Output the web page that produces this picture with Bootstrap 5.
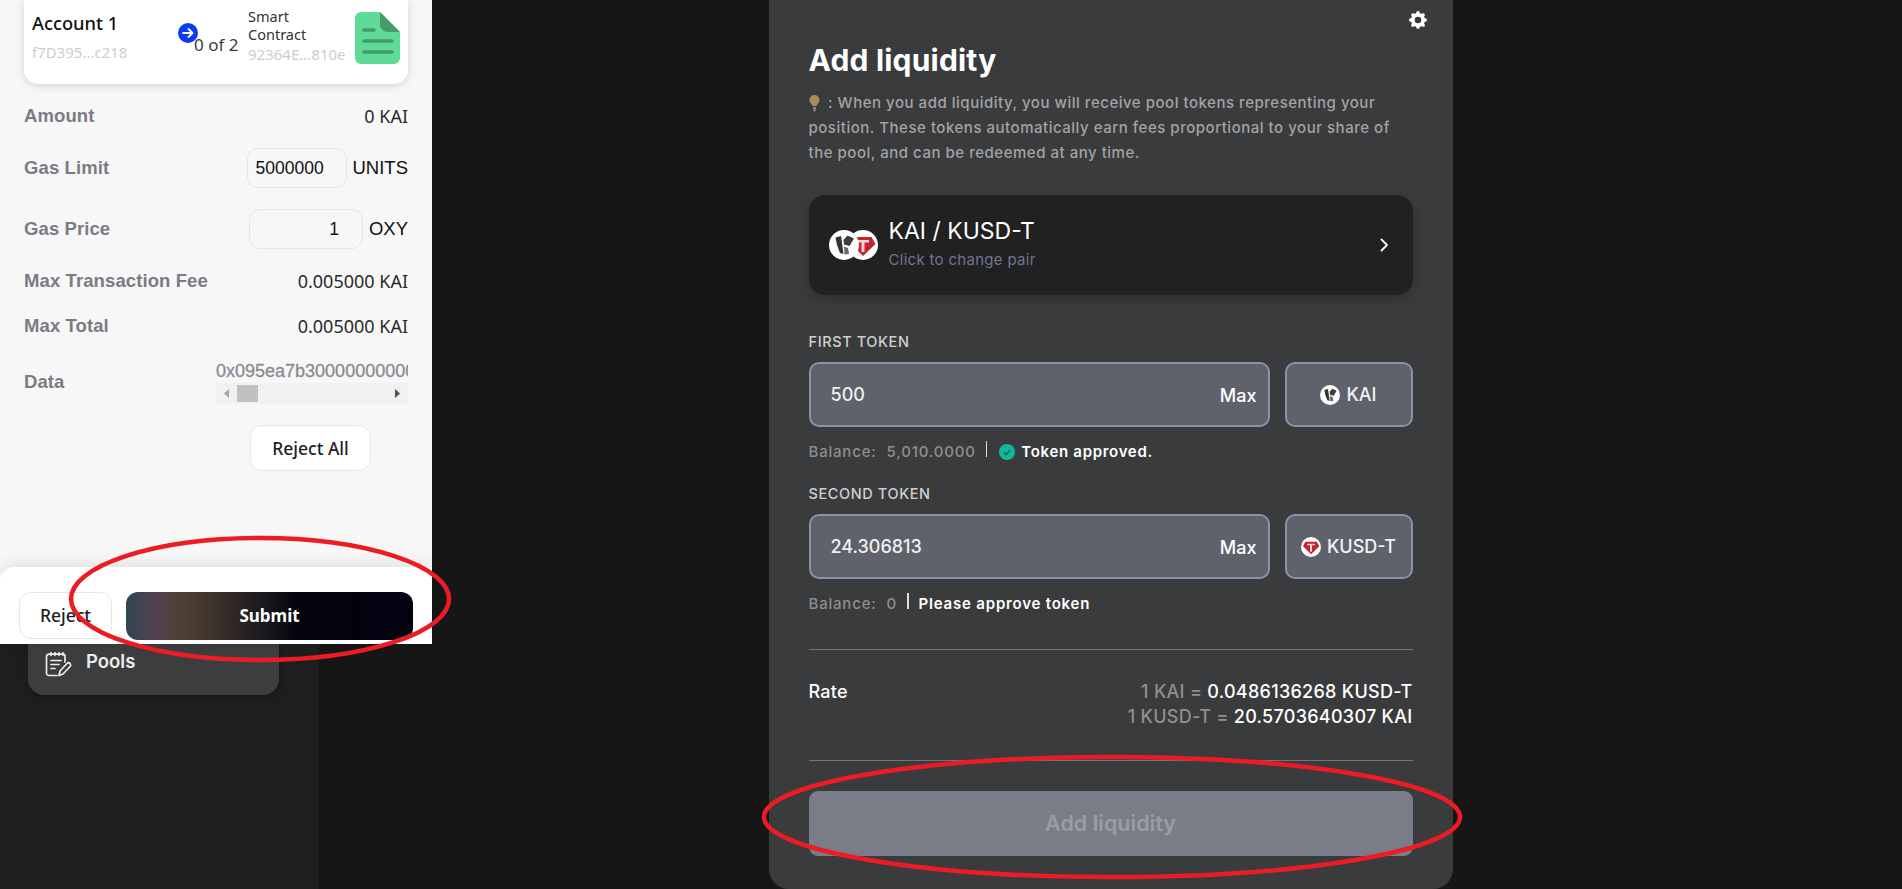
<!DOCTYPE html>
<html lang="en">
<head>
<meta charset="utf-8">
<title>Add liquidity</title>
<link rel="stylesheet" href="https://cdn.jsdelivr.net/npm/bootstrap@5.3.0/dist/css/bootstrap.min.css">
<style>
html,body{height:889px;overflow:hidden;background:#161616;}
body{font-family:"Inter",sans-serif;}
.stage{position:relative;height:889px;overflow:hidden;}
.side-col{width:319px;background:#1e1e1e;padding:567px 40px 0 28px;flex:none;}
.pool-item{height:128px;background:#3c3d3f;border-radius:16px;padding:85px 0 0 17px;color:#ececec;font-size:18.500px;font-weight:600;box-shadow:0 2px 6px rgba(0,0,0,.3);gap:14px;}
.pool-item span{line-height:20px;margin-top:-1px;}
.main-col{flex:1;}
.liq-card{width:684px;height:889px;background:#3a3b3d;border-radius:0 0 20px 20px;padding:0 40px;color:#fff;}
.gear-line{height:18px;margin:11px -14px 0 0;}
.liq-title{font-size:30px;line-height:34px;font-weight:700;margin:14px 0 0;letter-spacing:.2px;}
.liq-note{font-size:15px;line-height:25px;font-weight:500;color:#a3a3a3;margin:13px 0 0;letter-spacing:.52px;}
.pair-box{height:100px;margin-top:30px;background:#212121;border-radius:16px;padding:0 20px;box-shadow:0 4px 10px rgba(0,0,0,.22);}
.pair-logos{width:52px;height:30px;position:relative;margin-right:8px;}
.pair-logos svg{position:absolute;top:0;}
.pair-name{font-size:23px;line-height:26px;margin-top:-2px;font-weight:400;}
.pair-hint{font-size:15px;line-height:20px;color:#6f7690;margin-top:6px;letter-spacing:.3px;}
.tok-label{font-size:14.500px;line-height:20px;font-weight:500;color:#cfcfcf;letter-spacing:.6px;}
.first-label{margin-top:37px;}
.second-label{margin-top:22px;}
.tok-row{margin-top:10px;gap:15px;height:65px;}
.tok-field{flex:1;background:#5f626b;border:2px solid #8b93a6;border-radius:10px;padding:0 11px 0 20px;font-size:18px;font-weight:500;color:#f0f0f0;}
.tok-max{font-size:18px;font-weight:500;margin-top:2px;color:#fff;}
.tok-pick{width:128px;background:#5f626b;border:2px solid #8b93a6;border-radius:10px;font-size:18px;font-weight:500;color:#f2f2f2;gap:6px;padding:0;}
.tok-status{margin-top:15px;font-size:15px;line-height:20px;font-weight:500;color:#8e8e8e;letter-spacing:.8px;}
.tok-status .bal{margin-left:10px;}
.tok-bar{width:1.500px;height:16px;background:#ddd;margin:-6px 12px 0 10px;}
.tok-ok{color:#fff;margin-left:6px;font-weight:600;letter-spacing:.7px;}
.tok-warn{color:#fff;font-weight:600;margin-left:-2px;letter-spacing:.8px;}
.liq-rule{height:1px;background:#73747c;}
.rule-a{margin-top:35px;}
.rate-box{margin-top:29px;line-height:25px;font-size:18px;font-weight:500;height:51px;letter-spacing:.28px;}
.rate-vals{color:#8f8f8f;text-align:right;}
.rate-vals b{color:#fff;font-weight:500;}
.rule-b{margin-top:30px;}
.liq-submit{display:block;width:100%;height:65px;margin-top:30px;background:#7a7c88;border:0;border-radius:9px;color:#9b9da3;font-size:21.500px;font-weight:600;}
.liq-submit:disabled{background:#7a7c88;color:#9b9da3;opacity:1;}

.wallet-pop{position:absolute;left:0;top:0;width:432px;height:644px;background:#f7f7f7;color:#1a1a1a;font-family:"Noto Sans",sans-serif;}
.tx-head{height:84px;margin:0 24px;padding:0 8px;background:#fff;border-radius:0 0 14px 14px;box-shadow:0 2px 8px rgba(0,0,0,.14);}
.acc-col{width:146px;}
.acc-name{font-size:18.300px;line-height:22px;margin-top:12px;font-weight:500;color:#111;}
.acc-addr{font-size:15px;line-height:20px;margin-top:8px;color:#cdcdcd;}
.arrow-dot{width:20px;height:20px;margin-top:23px;flex:none;margin-right:-4px;}
.of-count{width:54px;font-size:17px;line-height:20px;margin-top:35px;color:#3b3b45;flex:none;padding-right:10px;white-space:nowrap;}
.sc-col{width:107px;flex:none;}
.sc-name{font-size:14.500px;line-height:18px;margin-top:7px;color:#333;}
.sc-addr{font-size:15px;line-height:20px;color:#cdcdcd;margin-top:1px;white-space:nowrap;}
.doc-ico{margin-top:12px;flex:none;}
.tx-row{margin:0 24px;}
.tx-key{font-family:"Liberation Sans",sans-serif;font-weight:700;font-size:18.500px;line-height:24px;color:#7b7b86;letter-spacing:.1px;}
.tx-val{font-size:18px;line-height:24px;color:#2a2a2a;}
.row-amount{margin-top:20px;}
.row-limit{margin-top:20px;height:40px;}
.row-price{margin-top:21px;height:40px;}
.row-fee{margin-top:20px;}
.row-total{margin-top:21px;}
.row-data{margin-top:21px;height:45px;}
.gas-input{height:40px;background:#f7f7f7;border:1px solid #e6e6e6;border-radius:11px;font-family:"Liberation Sans",sans-serif;font-size:17.500px;padding:0 8px;color:#111;margin-right:6px;box-shadow:none;}
.gas-a{width:100px;}
.gas-b{width:114px;text-align:right;padding-right:23px;}
.gas-unit{font-family:"Liberation Sans",sans-serif;font-size:18.500px;color:#111;}
.data-wrap{width:192px;}
.data-text{font-family:"Liberation Sans",sans-serif;font-size:18px;line-height:24px;color:#8a8a92;overflow:hidden;white-space:nowrap;-webkit-text-stroke:.3px #8a8a92;}
.scroll-track{height:21px;background:#f1f1f1;padding:0 8px;}
.scroll-thumb{width:21px;height:17px;background:#c1c1c1;margin-left:8px;}
.reject-all-line{margin:21px 0 0 250px;}
.pop-btn{background:#fff;border:1px solid #e6e6e6;border-radius:12px;color:#1d1d27;font-size:17.500px;font-weight:500;padding:0;}
.reject-all{width:121px;height:46px;}
.pop-foot{position:absolute;left:0;right:0;bottom:0;height:77px;background:#fff;border-radius:14px 0 0 0;padding:25px 19px 0;box-shadow:0 -4px 14px rgba(0,0,0,.09);gap:14px;}
.reject-one{width:93px;height:47px;}
.submit-btn{width:287px;height:48px;border:0;border-radius:12px;color:#fff;font-weight:700;font-size:17px;padding:0;background:linear-gradient(90deg,#2f4651 0%,#53414f 10%,#4d3f33 20%,#3b302c 32%,#16161b 50%,#03030f 60%,#020210 100%);}
.submit-btn:hover{color:#fff;}
.ink-layer{position:absolute;left:0;top:0;pointer-events:none;}
</style>
</head>
<body>
<svg width="0" height="0" class="d-block" style="position:absolute">
  <symbol id="kai-logo" viewBox="0 0 30 30">
    <circle cx="15" cy="15" r="15" fill="#fff"/>
    <path d="M6.500 7.500l5.500-1.500 2.500 18-3.500-1-3-8z" fill="#333"/>
    <path d="M14.500 10l4-4.500 6.500 3-4.500 7.500-5.500-1.500z" fill="#3d3d3d"/>
    <path d="M15 16.500l4 1.500 1 6-4.500.5z" fill="#666"/>
  </symbol>
  <symbol id="kusd-logo" viewBox="0 0 30 30">
    <circle cx="15" cy="15" r="15" fill="#fff"/>
    <path d="M6.500 7h17l4 7L15 26 3 14z" fill="#c4222c"/>
    <path d="M9 10h12v2.500h-4.500v9.500h-3v-9.500H9z" fill="#f4d5d5"/>
  </symbol>
</svg>

<div class="stage d-flex">
  <aside class="side-col">
    <div class="pool-item d-flex">
      <svg width="27" height="25" viewBox="0 0 27 25" fill="none" stroke="#ececec" stroke-width="1.700" stroke-linecap="round" stroke-linejoin="round">
        <path d="M20 10V4.200a2 2 0 0 0-2-2H4a2.500 2.500 0 0 0-2.500 2.500V21A2.500 2.500 0 0 0 4 23.500h8"/>
        <path d="M6 .8v2.500M10 .8v2.500M14 .8v2.500M18 .8v2.500M6 8.500h10M6 12.500h8M6 16.500h4"/>
        <path d="M14 23.500l1-4.500 7-7.500a2 2 0 0 1 3 3l-7 7.500z"/>
      </svg>
      <span>Pools</span>
    </div>
  </aside>

  <main class="main-col d-flex justify-content-center">
    <section class="liq-card">
      <div class="gear-line d-flex justify-content-end">
        <svg width="18" height="18" viewBox="0 0 16 16" fill="#fff"><path d="M9.405 1.05c-.413-1.4-2.397-1.4-2.81 0l-.1.34a1.464 1.464 0 0 1-2.105.872l-.31-.17c-1.283-.698-2.686.705-1.987 1.987l.169.311c.446.82.023 1.841-.872 2.105l-.34.1c-1.4.413-1.4 2.397 0 2.81l.34.1a1.464 1.464 0 0 1 .872 2.105l-.17.31c-.698 1.283.705 2.686 1.987 1.987l.311-.169a1.464 1.464 0 0 1 2.105.872l.1.34c.413 1.4 2.397 1.4 2.81 0l.1-.34a1.464 1.464 0 0 1 2.105-.872l.31.17c1.283.698 2.686-.705 1.987-1.987l-.169-.311a1.464 1.464 0 0 1 .872-2.105l.34-.1c1.4-.413 1.4-2.397 0-2.81l-.34-.1a1.464 1.464 0 0 1-.872-2.105l.17-.31c.698-1.283-.705-2.686-1.987-1.987l-.311.169a1.464 1.464 0 0 1-2.105-.872l-.1-.34zM8 10.930a2.929 2.929 0 1 1 0-5.860 2.929 2.929 0 0 1 0 5.858z"/></svg>
      </div>
      <h1 class="liq-title">Add liquidity</h1>
      <p class="liq-note"><svg width="11" height="17" viewBox="0 0 11 17" class="align-text-bottom me-1"><path d="M5.500 0C8.500 0 10.500 2.200 10.500 5c0 2.500-2 3.500-3 6H3.500c-1-2.500-3-3.500-3-6C.5 2.200 2.500 0 5.500 0z" fill="#a68c58"/><path d="M4 12h3l-.7 4.500H4.700z" fill="#8b8b8b"/></svg> : When you add liquidity, you will receive pool tokens representing your position. These tokens automatically earn fees proportional to your share of the pool, and can be redeemed at any time.</p>

      <div class="pair-box d-flex align-items-center">
        <div class="pair-logos flex-none">
          <svg width="30" height="30" style="left:19px"><use href="#kusd-logo"/></svg>
          <svg width="30" height="30" style="left:0"><use href="#kai-logo"/></svg>
        </div>
        <div class="flex-grow-1">
          <div class="pair-name">KAI / KUSD-T</div>
          <div class="pair-hint">Click to change pair</div>
        </div>
        <svg class="me-1" width="10" height="16" viewBox="0 0 10 16" fill="none" stroke="#fff" stroke-width="1.800" stroke-linecap="round" stroke-linejoin="round"><path d="M2.500 2.500L8 8l-5.500 5.500"/></svg>
      </div>

      <div class="tok-label first-label">FIRST TOKEN</div>
      <div class="tok-row d-flex">
        <div class="tok-field d-flex align-items-center justify-content-between"><span>500</span><span class="tok-max">Max</span></div>
        <button class="tok-pick btn d-flex align-items-center justify-content-center" type="button"><svg width="20" height="20"><use href="#kai-logo"/></svg>KAI</button>
      </div>
      <div class="tok-status d-flex align-items-center">
        <span>Balance:</span><span class="bal">5,010.0000</span><span class="tok-bar"></span>
        <svg width="16" height="16" viewBox="0 0 16 16"><circle cx="8" cy="8" r="8" fill="#10b99a"/><path d="M4.800 8.300l2.300 2.300 4-4.500" fill="none" stroke="#264a44" stroke-width="1.300"/></svg>
        <span class="tok-ok">Token approved.</span>
      </div>

      <div class="tok-label second-label">SECOND TOKEN</div>
      <div class="tok-row d-flex">
        <div class="tok-field d-flex align-items-center justify-content-between"><span>24.306813</span><span class="tok-max">Max</span></div>
        <button class="tok-pick btn d-flex align-items-center justify-content-center" type="button"><svg width="20" height="20"><use href="#kusd-logo"/></svg>KUSD-T</button>
      </div>
      <div class="tok-status d-flex align-items-center">
        <span>Balance:</span><span class="bal">0</span><span class="tok-bar"></span>
        <span class="tok-warn">Please approve token</span>
      </div>

      <div class="liq-rule rule-a"></div>
      <div class="rate-box d-flex justify-content-between">
        <span>Rate</span>
        <div class="rate-vals">
          <div>1 KAI = <b>0.0486136268 KUSD-T</b></div>
          <div>1 KUSD-T = <b>20.5703640307 KAI</b></div>
        </div>
      </div>
      <div class="liq-rule rule-b"></div>
      <button class="liq-submit" type="button" disabled>Add liquidity</button>
    </section>
  </main>

  <div class="wallet-pop">
    <div class="tx-head d-flex">
      <div class="acc-col">
        <div class="acc-name">Account 1</div>
        <div class="acc-addr">f7D395...c218</div>
      </div>
      <svg class="arrow-dot" width="20" height="20" viewBox="0 0 20 20"><circle cx="10" cy="10" r="10" fill="#0a3cf5"/><path d="M5 10h9M10.500 6l4 4-4 4" fill="none" stroke="#fff" stroke-width="1.800" stroke-linecap="round" stroke-linejoin="round"/></svg>
      <div class="of-count">0 of 2</div>
      <div class="sc-col">
        <div class="sc-name">Smart<br>Contract</div>
        <div class="sc-addr">92364E...810e</div>
      </div>
      <svg class="doc-ico" width="45" height="52" viewBox="0 0 45 52"><path d="M6 0h19l20 20v26a6 6 0 0 1-6 6H6a6 6 0 0 1-6-6V6a6 6 0 0 1 6-6z" fill="#5fdb95"/><path d="M25 0l20 20H33a8 8 0 0 1-8-8z" fill="#479a6c"/><path d="M9 18h10M9 29h28M9 40h28" stroke="#479a6c" stroke-width="3.500" stroke-linecap="round"/></svg>
    </div>

    <div class="tx-row row-amount d-flex justify-content-between"><span class="tx-key">Amount</span><span class="tx-val">0 KAI</span></div>
    <div class="tx-row row-limit d-flex justify-content-between align-items-center">
      <span class="tx-key">Gas Limit</span>
      <div class="d-flex align-items-center"><input class="gas-input gas-a" value="5000000" aria-label="Gas limit"><span class="gas-unit">UNITS</span></div>
    </div>
    <div class="tx-row row-price d-flex justify-content-between align-items-center">
      <span class="tx-key">Gas Price</span>
      <div class="d-flex align-items-center"><input class="gas-input gas-b" value="1" aria-label="Gas price"><span class="gas-unit">OXY</span></div>
    </div>
    <div class="tx-row row-fee d-flex justify-content-between"><span class="tx-key">Max Transaction Fee</span><span class="tx-val">0.005000 KAI</span></div>
    <div class="tx-row row-total d-flex justify-content-between"><span class="tx-key">Max Total</span><span class="tx-val">0.005000 KAI</span></div>
    <div class="tx-row row-data d-flex justify-content-between align-items-center">
      <span class="tx-key">Data</span>
      <div class="data-wrap">
        <div class="data-text">0x095ea7b3000000000000000000000000</div>
        <div class="scroll-track d-flex align-items-center">
          <svg width="5" height="9" viewBox="0 0 5 9"><path d="M5 0v9L0 4.500z" fill="#a3a3a3"/></svg>
          <div class="scroll-thumb"></div>
          <svg class="ms-auto" width="5" height="9" viewBox="0 0 5 9"><path d="M0 0v9l5-4.500z" fill="#505050"/></svg>
        </div>
      </div>
    </div>
    <div class="reject-all-line"><button class="btn pop-btn reject-all" type="button">Reject All</button></div>

    <div class="pop-foot d-flex">
      <button class="btn pop-btn reject-one" type="button">Reject</button>
      <button class="btn submit-btn" type="button">Submit</button>
    </div>
  </div>

  <svg class="ink-layer" width="1902" height="889" fill="none" stroke="#ed1c24" stroke-width="4.500">
    <ellipse cx="260" cy="599" rx="189" ry="61"/>
    <ellipse cx="1112" cy="817" rx="348" ry="60"/>
  </svg>
</div>
</body>
</html>
